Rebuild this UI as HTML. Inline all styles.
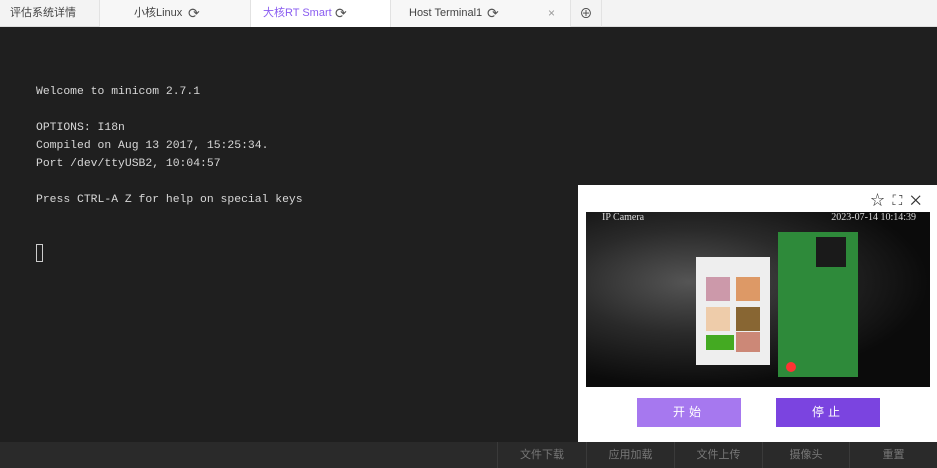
<!DOCTYPE html>
<html><head><meta charset="utf-8"><style>
*{margin:0;padding:0;box-sizing:border-box}
body{width:937px;height:468px;overflow:hidden;background:#1f1f1f;font-family:"Liberation Sans","Noto Sans CJK SC",sans-serif;position:relative}
.tabs{position:absolute;left:0;top:0;width:937px;height:27px;background:#f3f3f3;border-bottom:1px solid #ddd}
.tab{position:absolute;top:0;height:27px;font-size:11px;color:#444;line-height:27px;border-right:1px solid #e2e2e2}
.tab span.r{position:absolute;font-size:14px;color:#555}
.term{position:absolute;left:36px;top:83px;color:#d8d8d8;font-family:"Liberation Mono",monospace;font-size:11.4px;line-height:18px;white-space:pre}
.cursor{position:absolute;left:36px;top:244px;width:7px;height:18px;border:1px solid #ccc}
.panel{position:absolute;left:578px;top:185px;width:359px;height:257px;background:#fff}
.img{position:absolute;left:8px;top:27px;width:344px;height:175px;background:radial-gradient(ellipse at 30% 40%,#555 0%,#2a2a2a 35%,#0b0b0b 70%);overflow:hidden}
.btn{position:absolute;top:213px;width:104px;height:29px;color:#fff;font-size:12px;text-align:center;line-height:29px;letter-spacing:4px}
.bottom{position:absolute;left:0;top:442px;width:937px;height:26px;background:#2a2a2a}
.bi{position:absolute;top:0;height:26px;line-height:26px;font-size:11px;color:#777;text-align:center;border-left:1px solid #3a3a3a}
</style></head><body>
<div class="tabs">
<div class="tab" style="left:0;width:100px;padding-left:10px">评估系统详情</div>
<div class="tab" style="left:100px;width:151px;padding-left:34px;background:#f7f7f7">小核Linux<span class="r" style="left:88px">⟳</span></div>
<div class="tab" style="left:251px;width:140px;padding-left:12px;background:#fff;color:#8a5cf0">大核RT Smart<span class="r" style="left:84px">⟳</span></div>
<div class="tab" style="left:391px;width:180px;padding-left:18px;background:#f7f7f7">Host Terminal1<span class="r" style="left:96px">⟳</span><span class="r" style="left:157px;font-size:12px;color:#999">×</span></div>
<div class="tab" style="left:571px;width:31px;text-align:center;font-size:13px">⊕</div>
</div>
<div class="term">Welcome to minicom 2.7.1

OPTIONS: I18n
Compiled on Aug 13 2017, 15:25:34.
Port /dev/ttyUSB2, 10:04:57

Press CTRL-A Z for help on special keys</div>
<div class="cursor"></div>
<div class="panel">
<div style="position:absolute;right:8px;top:5px;font-size:14px;color:#333;letter-spacing:8px">☆⛶✕</div>
<div class="img">
<div style="position:absolute;left:16px;top:0;color:#ddd;font-family:'Liberation Serif',serif;font-size:10px">IP Camera</div>
<div style="position:absolute;right:14px;top:0;color:#ddd;font-family:'Liberation Serif',serif;font-size:10px">2023-07-14 10:14:39</div>
<div style="position:absolute;left:110px;top:45px;width:74px;height:108px;background:#eee"></div>
<div style="position:absolute;left:120px;top:65px;width:24px;height:24px;background:#c9a"></div>
<div style="position:absolute;left:150px;top:65px;width:24px;height:24px;background:#d96"></div>
<div style="position:absolute;left:120px;top:95px;width:24px;height:24px;background:#eca"></div>
<div style="position:absolute;left:150px;top:95px;width:24px;height:24px;background:#863"></div>
<div style="position:absolute;left:120px;top:123px;width:28px;height:15px;background:#4a2"></div>
<div style="position:absolute;left:150px;top:120px;width:24px;height:20px;background:#c87"></div>
<div style="position:absolute;left:192px;top:20px;width:80px;height:145px;background:#2e8a3a"></div>
<div style="position:absolute;left:230px;top:25px;width:30px;height:30px;background:#1a1a1a"></div>
<div style="position:absolute;left:200px;top:150px;width:10px;height:10px;border-radius:50%;background:#f33"></div>
</div>
<div class="btn" style="left:59px;background:#a678ef">开始</div>
<div class="btn" style="left:198px;background:#7b44e0">停止</div>
</div>
<div class="bottom">
<div class="bi" style="left:497px;width:89px">文件下载</div>
<div class="bi" style="left:586px;width:88px">应用加载</div>
<div class="bi" style="left:674px;width:88px">文件上传</div>
<div class="bi" style="left:762px;width:87px">摄像头</div>
<div class="bi" style="left:849px;width:88px">重置</div>
</div>
</body></html>
